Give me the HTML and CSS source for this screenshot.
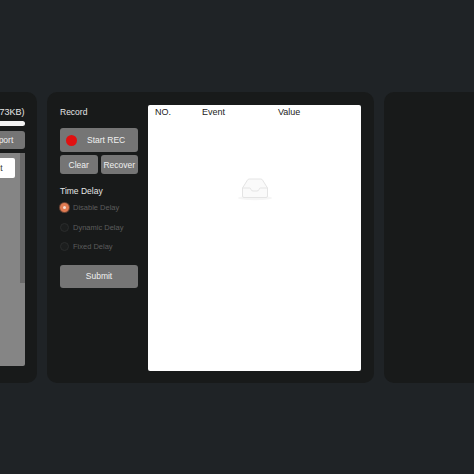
FILE: index.html
```html
<!DOCTYPE html>
<html lang="en">
<head>
  <meta charset="UTF-8" />
  <title>Record</title>
  <link rel="stylesheet" href="styles.css">
</head>
<body>

<div class="panels">
  <!-- Upload panel, mostly off the left edge -->
  <div class="panel upload">
    <div class="file-name">(73KB)</div>
    <div class="progress"></div>
    <button class="btn import">Import</button>
    <div class="preview">
      <div class="preview-btn">Edit</div>
      <div class="scroll-thumb"></div>
    </div>
  </div>

  <div class="panel record">
    <div class="controls">
      <div class="title">Record</div>
      <button class="btn start"><span class="dot"></span><span>Start REC</span></button>
      <div class="btn-row">
        <button class="btn small">Clear</button>
        <button class="btn small">Recover</button>
      </div>
      <div class="title delay-title">Time Delay</div>
      <div class="radio checked"><span class="circle"></span>Disable Delay</div>
      <div class="radio"><span class="circle"></span>Dynamic Delay</div>
      <div class="radio"><span class="circle"></span>Fixed Delay</div>
      <button class="btn submit">Submit</button>
    </div>

    <div class="table">
      <div class="table-head">
        <span class="col-no">NO.</span>
        <span class="col-event">Event</span>
        <span class="col-value">Value</span>
      </div>
      <div class="empty">
        <svg width="36" height="24" viewBox="0 0 36 24" fill="none">
          <ellipse cx="18" cy="21" rx="17" ry="2.2" fill="#f5f5f5"/>
          <path d="M5.5 11 L10.5 3 Q11 2 12.5 2 H23.5 Q25 2 25.5 3 L30.5 11 V19 Q30.5 20.5 29 20.5 H7 Q5.5 20.5 5.5 19 Z" fill="#fafafa" stroke="#e4e4e4"/>
          <path d="M5.5 11 H12.5 Q13.5 11 14 12.5 Q14.5 14 16 14 H20 Q21.5 14 22 12.5 Q22.5 11 23.5 11 H30.5" fill="none" stroke="#e4e4e4"/>
        </svg>
      </div>
    </div>
  </div>

  <div class="panel next"></div>
</div>

</body>
</html>
```

FILE: styles.css
```css
* {
  box-sizing: border-box;
}
body {
  margin: 0;
  height: 100vh;
  overflow: hidden;
  background: #1f2326;
  font-family: "Liberation Sans", sans-serif;
  color: #e6e6e6;
}
.panels {
  display: flex;
  gap: 10px;
  height: 291px;
  margin-top: 92px;
}
.panel {
  flex: none;
  height: 100%;
  background: #181a1a;
  border-radius: 10px;
}
.upload {
  width: 72px;
  margin-left: -35px;
  padding: 12px 12.5px 17px 13px;
  display: flex;
  flex-direction: column;
  align-items: stretch;
}
.file-name {
  height: 17px;
  font-size: 9px;
  line-height: 16px;
  text-align: right;
  white-space: nowrap;
}
.progress {
  height: 5px;
  background: #f2f2f2;
  border-radius: 3px;
}
.btn {
  display: block;
  border: none;
  border-radius: 3px;
  background: #757575;
  color: #f0f0f0;
  font-family: inherit;
  font-size: 8.5px;
  padding: 0;
}
.import {
  height: 18px;
  margin-top: 5px;
}
.preview {
  position: relative;
  flex: 1;
  margin-top: 4px;
  background: #858585;
  border-radius: 2px;
  padding: 5px 10px 0 0;
}
.preview-btn {
  height: 20px;
  background: #fff;
  border-radius: 2px;
  color: #333;
  font-size: 8.5px;
  line-height: 20px;
  text-align: right;
  padding-right: 12px;
}
.scroll-thumb {
  position: absolute;
  top: 0;
  right: 0;
  width: 5px;
  height: 130px;
  background: #6a6a6a;
}
.record {
  width: 327px;
  padding: 13px;
  display: flex;
  gap: 10px;
}
.controls {
  width: 78px;
  flex: none;
}
.title {
  font-size: 8.5px;
  line-height: 14px;
}
.start {
  width: 100%;
  height: 24px;
  margin-top: 9px;
  display: flex;
  align-items: center;
  padding-left: 6px;
}
.start span:last-child {
  margin-left: 10px;
}
.dot {
  width: 11px;
  height: 11px;
  border-radius: 50%;
  background: #e01010;
}
.btn-row {
  display: flex;
  gap: 3px;
  margin-top: 3px;
}
.small {
  flex: 1;
  height: 19px;
}
.delay-title {
  margin-top: 10px;
}
.radio {
  display: flex;
  align-items: center;
  gap: 4px;
  height: 19.5px;
  font-size: 7.5px;
  color: #5c5c5c;
}
.circle {
  width: 9px;
  height: 9px;
  border-radius: 50%;
  background: #1c1e1e;
  border: 1px solid #2a2c2c;
}
.checked .circle {
  border: 3px solid #e07b52;
  box-shadow: 0 0 0 1px #6b4334;
  background: #f5e0d6;
}
.submit {
  width: 100%;
  height: 23px;
  margin-top: 8px;
}
.table {
  flex: 1;
  height: 266px;
  background: #fff;
  border-radius: 2px;
  display: flex;
  flex-direction: column;
  color: #222;
  font-size: 9px;
}
.table-head {
  display: flex;
  padding: 2px 7px 0;
  line-height: 11px;
}
.col-no {
  width: 47px;
}
.col-event {
  width: 76px;
}
.empty {
  display: flex;
  justify-content: center;
  margin-top: 59px;
}
.next {
  width: 120px;
}
```
